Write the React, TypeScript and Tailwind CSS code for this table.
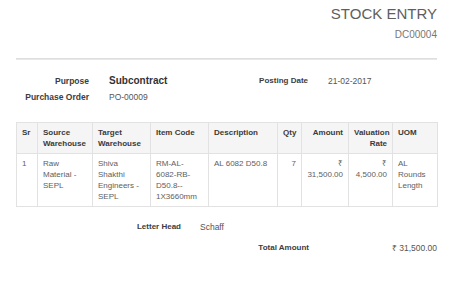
import React from 'react';

interface Row {
    sr: string;
    source: string;
    target: string;
    itemCode: React.ReactNode;
    description: string;
    qty: string;
    amount: string;
    rate: string;
    uom: string;
}

const rows: Row[] = [
    {
        sr: '1',
        source: 'Raw Material - SEPL',
        target: 'Shiva Shakthi Engineers - SEPL',
        itemCode: (
            <>
                RM-AL-6082-RB-<span className="whitespace-nowrap">D50.8--</span><wbr />1X3660mm
            </>
        ),
        description: 'AL 6082 D50.8',
        qty: '7',
        amount: '₹ 31,500.00',
        rate: '₹ 4,500.00',
        uom: 'AL Rounds Length',
    },
];

const th = "border border-[#e2e2e2] px-[5px] py-[4px] font-bold text-[#3a3a3a] align-top";
const td = "border border-[#e2e2e2] px-[5px] py-[4px] text-[#5e5e5e] align-top";

const App: React.FC = () => {
    return (
        <div className="w-[474px] h-[300px] bg-white overflow-hidden font-['Liberation_Sans',Arial,sans-serif]">
            <div className="w-[421px] ml-[16px]">
                <div className="flex flex-col items-end pt-[5px]">
                    <div className="text-[15px] leading-[18px] text-[#5e5e5e]">STOCK ENTRY</div>
                    <div className="mt-[6px] text-[10px] leading-[12px] text-[#777]">DC00004</div>
                </div>
                <div className="mt-[17px] h-[2px] bg-[#e8e8e8] border-t border-[#dedede]" />

                <div className="mt-[14px] flex items-center">
                    <div className="w-[211px] flex items-center">
                        <div className="w-[73px] text-right text-[8.5px] leading-[14px] font-bold text-[#3d3d3d]">Purpose</div>
                        <div className="ml-[20px] text-[10px] leading-[14px] font-bold text-[#333]">Subcontract</div>
                    </div>
                    <div className="flex items-center">
                        <div className="w-[81px] text-right text-[8px] leading-[14px] font-bold text-[#3d3d3d]">Posting Date</div>
                        <div className="ml-[20px] text-[8.5px] leading-[14px] text-[#555]">21-02-2017</div>
                    </div>
                </div>
                <div className="mt-[3px] flex items-center">
                    <div className="w-[73px] text-right text-[8.5px] leading-[12px] font-bold text-[#3d3d3d]">Purchase Order</div>
                    <div className="ml-[20px] text-[8.5px] leading-[12px] text-[#555]">PO-00009</div>
                </div>

                <table className="mt-[19px] w-[421px] table-fixed border-collapse text-[8px] leading-[11px]">
                    <colgroup>
                        <col className="w-[21px]" />
                        <col className="w-[55px]" />
                        <col className="w-[58px]" />
                        <col className="w-[58px]" />
                        <col className="w-[69px]" />
                        <col className="w-[24px]" />
                        <col className="w-[47px]" />
                        <col className="w-[44px]" />
                        <col className="w-[45px]" />
                    </colgroup>
                    <thead>
                        <tr className="bg-[#f5f5f5]">
                            <th className={`${th} text-left`}>Sr</th>
                            <th className={`${th} text-left`}>Source Warehouse</th>
                            <th className={`${th} text-left`}>Target Warehouse</th>
                            <th className={`${th} text-left`}>Item Code</th>
                            <th className={`${th} text-left`}>Description</th>
                            <th className={`${th} text-right`}>Qty</th>
                            <th className={`${th} text-right`}>Amount</th>
                            <th className={`${th} text-right`}>Valuation Rate</th>
                            <th className={`${th} text-left`}>UOM</th>
                        </tr>
                    </thead>
                    <tbody>
                        {rows.map(row => (
                            <tr key={row.sr}>
                                <td className={td}>{row.sr}</td>
                                <td className={td}>{row.source}</td>
                                <td className={td}>{row.target}</td>
                                <td className={td}>{row.itemCode}</td>
                                <td className={td}>{row.description}</td>
                                <td className={`${td} text-right`}>{row.qty}</td>
                                <td className={`${td} text-right`}>{row.amount}</td>
                                <td className={`${td} text-right`}>{row.rate}</td>
                                <td className={td}>{row.uom}</td>
                            </tr>
                        ))}
                    </tbody>
                </table>

                <div className="mt-[14px] flex items-center">
                    <div className="w-[165px] text-right text-[8px] leading-[12px] font-bold text-[#3d3d3d]">Letter Head</div>
                    <div className="ml-[19px] text-[8.5px] leading-[12px] text-[#555]">Schaff</div>
                </div>
                <div className="mt-[9px] flex items-center">
                    <div className="w-[293px] text-right text-[8px] leading-[12px] font-bold text-[#3d3d3d]">Total Amount</div>
                    <div className="flex-1 text-right text-[8.5px] leading-[12px] text-[#555]">₹ 31,500.00</div>
                </div>
            </div>
        </div>
    );
};

export default App;
